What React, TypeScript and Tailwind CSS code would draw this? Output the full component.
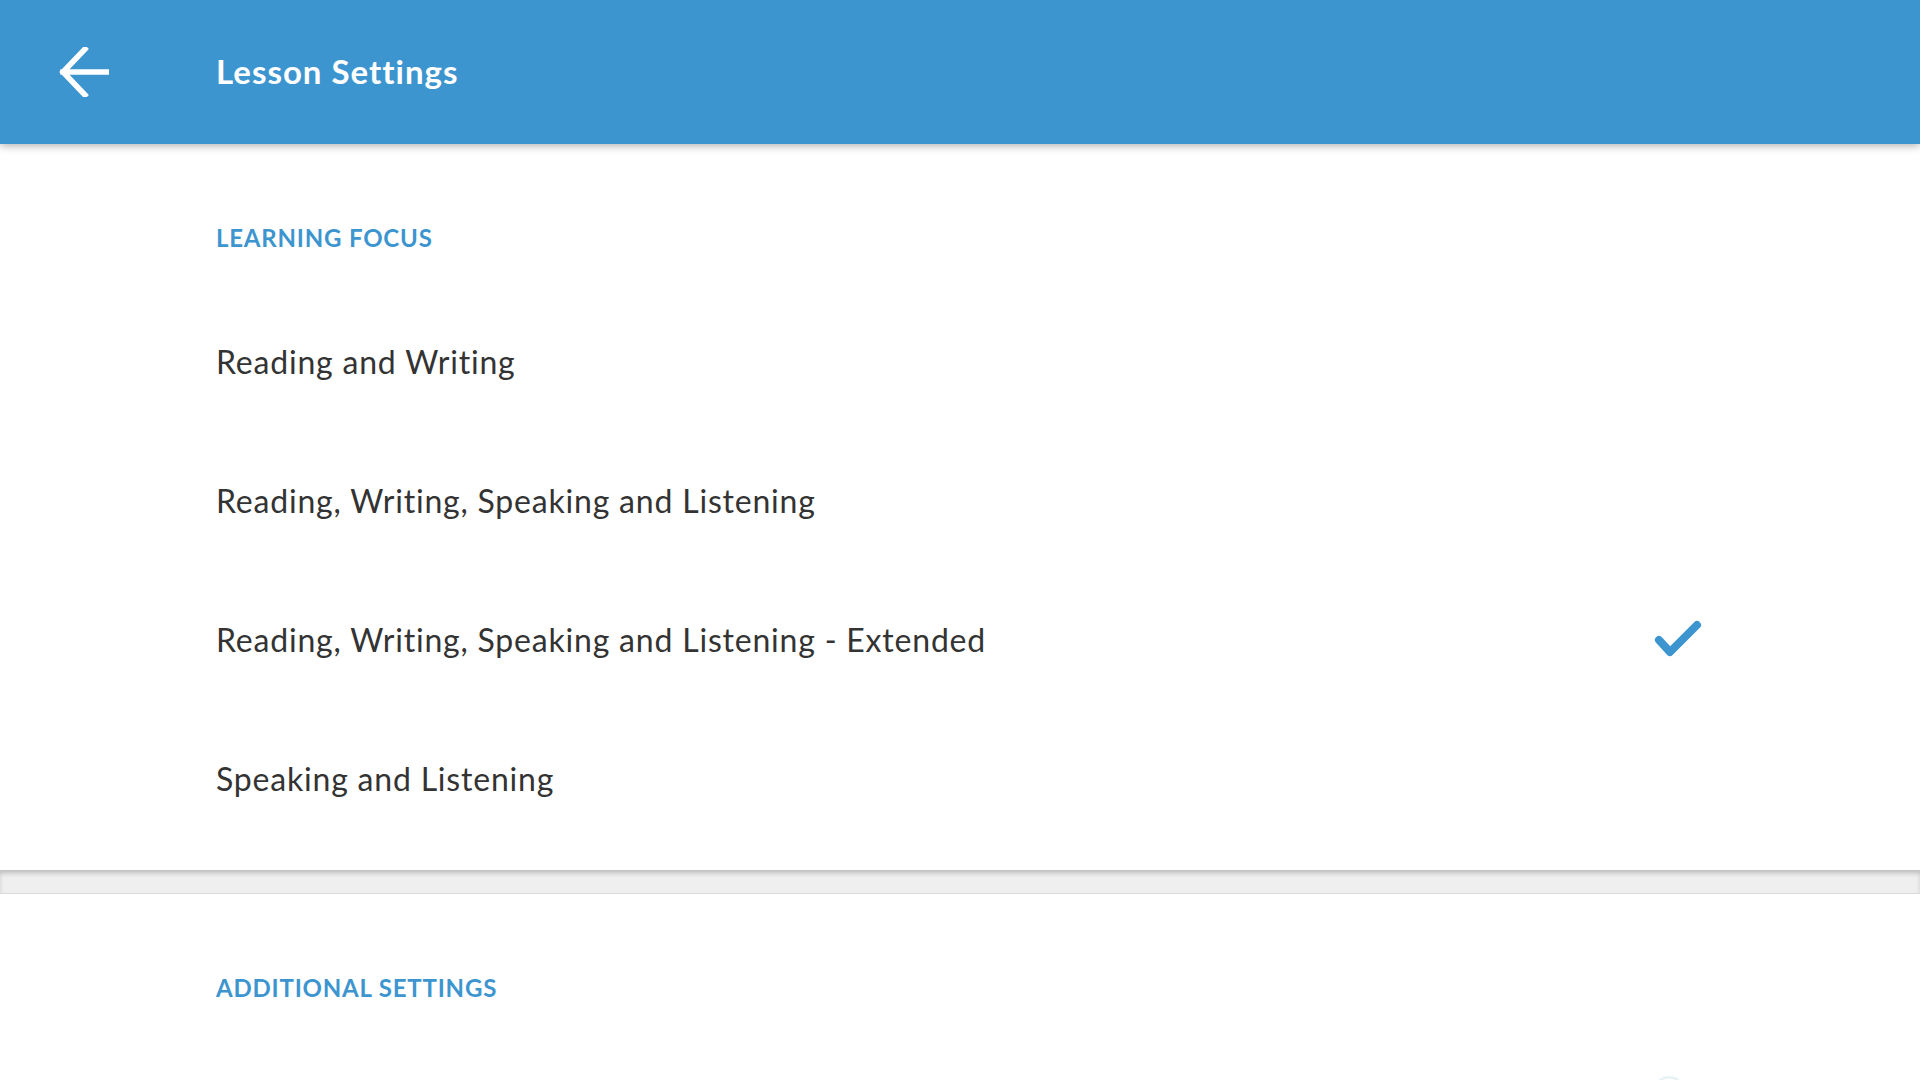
import React from 'react';

const focusOptions = [
  'Reading and Writing',
  'Reading, Writing, Speaking and Listening',
  'Reading, Writing, Speaking and Listening - Extended',
  'Speaking and Listening',
];

function BackArrow() {
  return (
    <svg width="50" height="50" viewBox="0 0 50 50" fill="none">
      <path
        d="M26 2 L4 25 L26 48 M4 25 L48 25"
        stroke="white"
        strokeWidth="5.5"
        strokeLinecap="square"
      />
    </svg>
  );
}

function Check() {
  return (
    <svg width="52" height="44" viewBox="0 0 52 44" fill="none">
      <path
        d="M7 22 L18 34 L45 7"
        stroke="#3d95d0"
        strokeWidth="8"
        strokeLinecap="round"
        strokeLinejoin="round"
      />
    </svg>
  );
}

export default function App() {
  const selected = 2;

  return (
    <div
      className="h-[1080px] w-[1920px] overflow-hidden bg-white [font-variant-ligatures:none]"
      style={{ fontFamily: 'Lato, "Open Sans", sans-serif' }}
    >
      {/* Header */}
      <header className="relative z-10 flex h-[144px] items-center bg-[#3d95d0] shadow-[0_2px_8px_rgba(0,0,0,0.3)]">
        <div className="ml-[59px] flex h-[50px] w-[50px] items-center justify-center">
          <BackArrow />
        </div>
        <h1 className="mb-[2px] ml-[107px] text-[33px] font-bold leading-none tracking-[1px] text-white">Lesson Settings</h1>
      </header>

      {/* Learning focus */}
      <section className="bg-white pb-[22px] pt-[79px]">
        <div className="ml-[216px] h-[30px] text-[24px] font-bold leading-[30px] tracking-[0.8px] text-[#3d95d0]">
          LEARNING FOCUS
        </div>
        <div className="mt-[39px]">
          {focusOptions.map((opt, i) => (
            <div key={opt} className="flex h-[139px] items-center justify-between pl-[216px] pr-[216px]">
              <span className="text-[32px] leading-none tracking-[0.8px] text-[#333333]">{opt}</span>
              {i === selected && <Check />}
            </div>
          ))}
        </div>
      </section>

      {/* Divider band */}
      <div className="h-[24px] border-b border-[#dcdcdc] bg-[#efefef] shadow-[inset_0_4px_5px_-1px_rgba(0,0,0,0.22)]" />

      {/* Additional settings */}
      <section className="bg-white pt-[79px]">
        <div className="ml-[216px] h-[30px] text-[24px] font-bold leading-[30px] tracking-[0.8px] text-[#3d95d0]">
          ADDITIONAL SETTINGS
        </div>
        <div className="mt-[75px] flex justify-end pr-[236px]">
          <div className="h-[30px] w-[30px] rounded-full bg-white shadow-[0_0_3px_rgba(60,150,170,0.5)]" />
        </div>
      </section>
    </div>
  );
}
